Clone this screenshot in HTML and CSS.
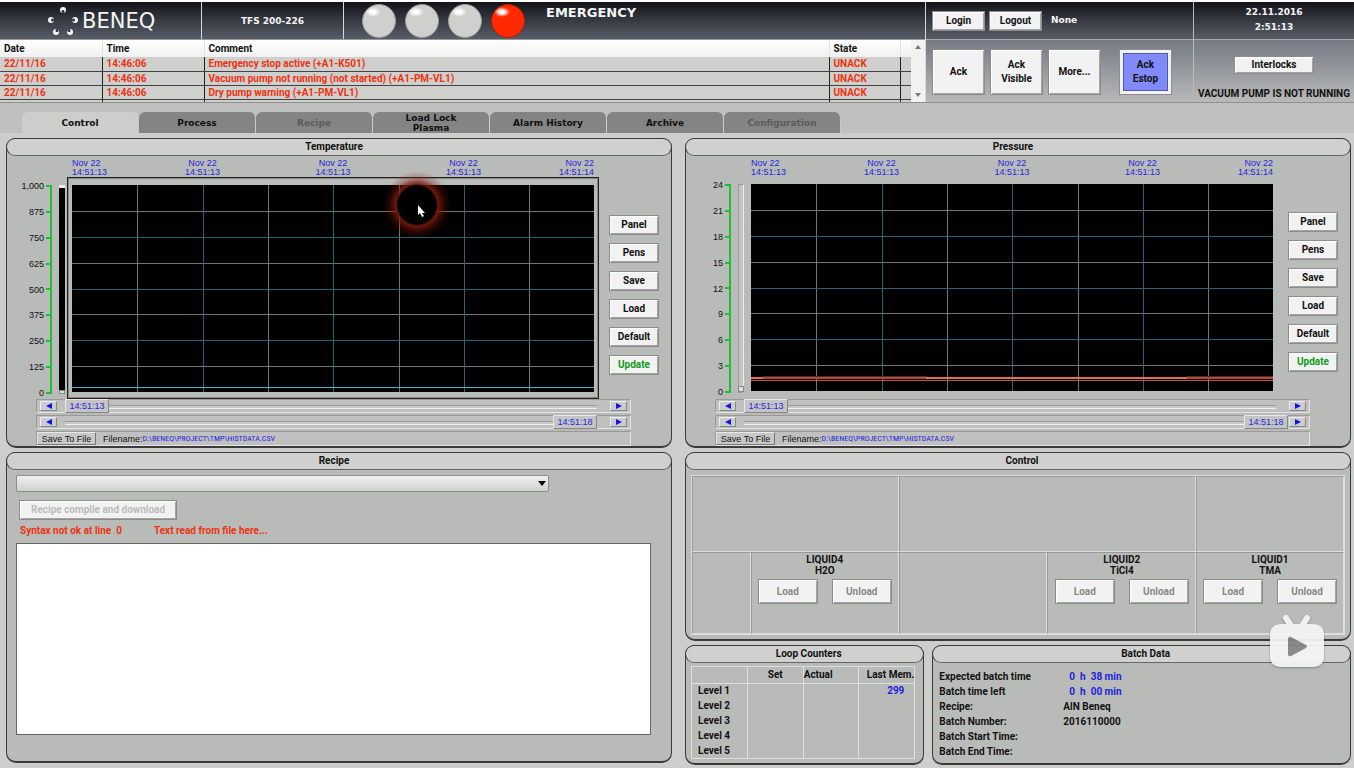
FILE: index.html
```html
<!doctype html>
<html lang="en">
<head>
    <meta charset="utf-8">
    <meta name="viewport" content="width=device-width, initial-scale=1">
    <link rel="stylesheet" href="styles.css">
    <title>TFS 200-226</title>
</head>
<body>
    <header class="top">
        <div class="top-left">
            <div class="banner">
                <div class="logo">
                    <svg width="30" height="30" viewBox="0 0 30 30" aria-hidden="true">
                        <g fill="#f4f4f4">
                            <circle cx="15" cy="4" r="3"/><circle cx="3" cy="14" r="3"/><circle cx="27" cy="14" r="3"/>
                            <circle cx="8" cy="26" r="3"/><circle cx="22" cy="26" r="3"/>
                        </g>
                        <g fill="#2b2f36">
                            <circle cx="15" cy="5.5" r="1.5"/><circle cx="4.5" cy="14" r="1.5"/><circle cx="25.5" cy="14" r="1.5"/>
                            <circle cx="9" cy="24.5" r="1.5"/><circle cx="21" cy="24.5" r="1.5"/>
                        </g>
                    </svg>
                    <span>BENEQ</span>
                </div>
                <div class="model">TFS 200-226</div>
                <div class="lamps">
                    <i class="lamp"></i><i class="lamp"></i><i class="lamp"></i><i class="lamp lamp-red"></i>
                    <b>EMERGENCY</b>
                </div>
            </div>
            <div class="alarms">
                <table>
                    <thead>
                        <tr><th class="c-date">Date</th><th class="c-time">Time</th><th>Comment</th><th class="c-state">State</th><th class="c-end"></th></tr>
                    </thead>
                    <tbody>
                        <tr><td>22/11/16</td><td>14:46:06</td><td>Emergency stop active (+A1-K501)</td><td>UNACK</td><td></td></tr>
                        <tr><td>22/11/16</td><td>14:46:06</td><td>Vacuum pump not running (not started) (+A1-PM-VL1)</td><td>UNACK</td><td></td></tr>
                        <tr><td>22/11/16</td><td>14:46:06</td><td>Dry pump warning (+A1-PM-VL1)</td><td>UNACK</td><td></td></tr>
                        <tr class="rest"><td></td><td></td><td></td><td></td><td></td></tr>
                    </tbody>
                </table>
                <div class="scroll">
                    <svg width="6" height="4" viewBox="0 0 6 4"><path d="M3 0L6 4H0Z" fill="#777"/></svg>
                    <svg width="6" height="4" viewBox="0 0 6 4"><path d="M0 0H6L3 4Z" fill="#777"/></svg>
                </div>
            </div>
        </div>
        <div class="top-mid">
            <div class="user">
                <button class="btn">Login</button>
                <button class="btn">Logout</button>
                <span>None</span>
            </div>
            <div class="acks">
                <button class="btn">Ack</button>
                <button class="btn">Ack<br>Visible</button>
                <button class="btn">More...</button>
                <button class="btn btn-estop">Ack<br>Estop</button>
            </div>
        </div>
        <div class="top-right">
            <div class="clock">22.11.2016<br>2:51:13</div>
            <div class="status">
                <button class="btn">Interlocks</button>
                <span>VACUUM PUMP IS NOT RUNNING</span>
            </div>
        </div>
    </header>

    <nav class="tabs">
        <button class="tab active">Control</button>
        <button class="tab">Process</button>
        <button class="tab" disabled>Recipe</button>
        <button class="tab">Load Lock<br>Plasma</button>
        <button class="tab">Alarm History</button>
        <button class="tab">Archive</button>
        <button class="tab" disabled>Configuration</button>
    </nav>

    <main>
        <div class="col">
            <section class="panel panel-wide">
                <h2>Temperature</h2>
                <div class="trend trend-selected">
                    <div class="times">
                        <span>Nov 22<br>14:51:13</span><span>Nov 22<br>14:51:13</span><span>Nov 22<br>14:51:13</span><span>Nov 22<br>14:51:13</span><span>Nov 22<br>14:51:14</span>
                    </div>
                    <div class="scale">
                        <div class="nums"><span>1,000</span><span>875</span><span>750</span><span>625</span><span>500</span><span>375</span><span>250</span><span>125</span><span>0</span></div>
                        <svg class="axis" width="6" height="209" viewBox="0 0 6 209"><path d="M5 0V209M0 1H5M0 27H5M0 53H5M0 79H5M0 104H5M0 130H5M0 156H5M0 182H5M0 208H5"/></svg>
                    </div>
                    <input class="range" type="range" min="0" max="1000" value="0" aria-label="Temperature range">
                    <div class="plot">
                        <svg viewBox="0 0 522 207" preserveAspectRatio="none">
                            <path class="g-grey" d="M65 0V207M196 0V207M327 0V207M457 0V207M0 26H522M0 78H522M0 129H522M0 181H522"/>
                            <path class="g-teal" d="M131 0V207M261 0V207M392 0V207M0 52H522M0 104H522M0 155H522"/>
                            <path class="pen-blue" d="M0 202H522"/>
                        </svg>
                        <div class="glow"></div>
                        <svg class="cursor" width="9" height="13" viewBox="0 0 9 13"><path d="M1 0V10L3 8L5 12L7 11L5 8H8Z" fill="#fff"/></svg>
                    </div>
                    <div class="tools">
                        <button class="btn">Panel</button>
                        <button class="btn">Pens</button>
                        <button class="btn">Save</button>
                        <button class="btn">Load</button>
                        <button class="btn">Default</button>
                        <button class="btn green">Update</button>
                    </div>
                </div>
                <div class="bars">
                    <div class="bar">
                        <button class="step" aria-label="Start back"><svg width="6" height="6" viewBox="0 0 6 6"><path d="M6 0V6L0 3Z"/></svg></button>
                        <div class="track"><input type="range" value="0" aria-label="Start time"><output>14:51:13</output></div>
                        <button class="step" aria-label="Start forward"><svg width="6" height="6" viewBox="0 0 6 6"><path d="M0 0V6L6 3Z"/></svg></button>
                    </div>
                    <div class="bar">
                        <button class="step" aria-label="End back"><svg width="6" height="6" viewBox="0 0 6 6"><path d="M6 0V6L0 3Z"/></svg></button>
                        <div class="track track-end"><input type="range" value="100" aria-label="End time"><output>14:51:18</output></div>
                        <button class="step" aria-label="End forward"><svg width="6" height="6" viewBox="0 0 6 6"><path d="M0 0V6L6 3Z"/></svg></button>
                    </div>
                    <div class="bar file">
                        <button>Save To File</button>
                        <span>Filename:</span><span class="path">D:\BENEQ\PROJECT\TMP\HISTDATA.CSV</span>
                    </div>
                </div>
            </section>

            <section class="panel panel-wide">
                <h2>Recipe</h2>
                <div class="recipe">
                    <div class="pick">
                        <select aria-label="Recipe"><option></option></select>
                        <svg width="8" height="5" viewBox="0 0 8 5"><path d="M0 0H8L4 5Z"/></svg>
                    </div>
                    <button class="btn compile" disabled>Recipe compile and download</button>
                    <p class="msgs"><span>Syntax not ok at line&nbsp; 0</span><span>Text read from file here...</span></p>
                    <textarea aria-label="Recipe text"></textarea>
                </div>
            </section>
        </div>

        <div class="col">
            <section class="panel panel-wide">
                <h2>Pressure</h2>
                <div class="trend">
                    <div class="times">
                        <span>Nov 22<br>14:51:13</span><span>Nov 22<br>14:51:13</span><span>Nov 22<br>14:51:13</span><span>Nov 22<br>14:51:13</span><span>Nov 22<br>14:51:14</span>
                    </div>
                    <div class="scale">
                        <div class="nums"><span>24</span><span>21</span><span>18</span><span>15</span><span>12</span><span>9</span><span>6</span><span>3</span><span>0</span></div>
                        <svg class="axis" width="6" height="209" viewBox="0 0 6 209"><path d="M5 0V209M0 1H5M0 27H5M0 53H5M0 79H5M0 104H5M0 130H5M0 156H5M0 182H5M0 208H5"/></svg>
                    </div>
                    <input class="range" type="range" min="0" max="24" value="0" aria-label="Pressure range">
                    <div class="plot">
                        <svg viewBox="0 0 522 207" preserveAspectRatio="none">
                            <path class="g-grey" d="M65 0V207M196 0V207M327 0V207M457 0V207M0 26H522M0 78H522M0 129H522M0 181H522"/>
                            <path class="g-teal" d="M131 0V207M261 0V207M392 0V207M0 52H522M0 104H522M0 155H522"/>
                            <path class="pen-green" d="M12 192H175V193H436V192H522"/>
                            <path class="pen-orange" d="M0 196H522"/>
                            <path class="pen-red" d="M0 194H522"/>
                            <path class="pen-pink" d="M0 194H12M175 194H436"/>
                        </svg>
                    </div>
                    <div class="tools">
                        <button class="btn">Panel</button>
                        <button class="btn">Pens</button>
                        <button class="btn">Save</button>
                        <button class="btn">Load</button>
                        <button class="btn">Default</button>
                        <button class="btn green">Update</button>
                    </div>
                </div>
                <div class="bars">
                    <div class="bar">
                        <button class="step" aria-label="Start back"><svg width="6" height="6" viewBox="0 0 6 6"><path d="M6 0V6L0 3Z"/></svg></button>
                        <div class="track"><input type="range" value="0" aria-label="Start time"><output>14:51:13</output></div>
                        <button class="step" aria-label="Start forward"><svg width="6" height="6" viewBox="0 0 6 6"><path d="M0 0V6L6 3Z"/></svg></button>
                    </div>
                    <div class="bar">
                        <button class="step" aria-label="End back"><svg width="6" height="6" viewBox="0 0 6 6"><path d="M6 0V6L0 3Z"/></svg></button>
                        <div class="track track-end track-full"><input type="range" value="100" aria-label="End time"><output>14:51:18</output></div>
                        <button class="step" aria-label="End forward"><svg width="6" height="6" viewBox="0 0 6 6"><path d="M0 0V6L6 3Z"/></svg></button>
                    </div>
                    <div class="bar file">
                        <button>Save To File</button>
                        <span>Filename:</span><span class="path">D:\BENEQ\PROJECT\TMP\HISTDATA.CSV</span>
                    </div>
                </div>
            </section>

            <section class="panel">
                <h2>Control</h2>
                <div class="liquids">
                    <div class="wide"></div>
                    <div class="wide"></div>
                    <div></div>
                    <div></div>
                    <div class="liquid">
                        <p>LIQUID4<br>H2O</p>
                        <button class="btn" disabled>Load</button><button class="btn" disabled>Unload</button>
                    </div>
                    <div></div>
                    <div class="liquid">
                        <p>LIQUID2<br>TiCl4</p>
                        <button class="btn" disabled>Load</button><button class="btn" disabled>Unload</button>
                    </div>
                    <div class="liquid">
                        <p>LIQUID1<br>TMA</p>
                        <button class="btn" disabled>Load</button><button class="btn" disabled>Unload</button>
                    </div>
                </div>
            </section>

            <div class="pair">
                <section class="panel">
                    <h2>Loop Counters</h2>
                    <table class="loops">
                        <thead>
                            <tr><th></th><th>Set</th><th class="act">Actual</th><th class="mem">Last Mem.</th></tr>
                        </thead>
                        <tbody>
                            <tr><td>Level 1</td><td></td><td></td><td class="blue">299</td></tr>
                            <tr><td>Level 2</td><td></td><td></td><td></td></tr>
                            <tr><td>Level 3</td><td></td><td></td><td></td></tr>
                            <tr><td>Level 4</td><td></td><td></td><td></td></tr>
                            <tr><td>Level 5</td><td></td><td></td><td></td></tr>
                        </tbody>
                    </table>
                </section>
                <section class="panel">
                    <h2>Batch Data</h2>
                    <dl class="batch">
                        <dt>Expected batch time</dt><dd class="blue">0&nbsp; h&nbsp; 38 min</dd>
                        <dt>Batch time left</dt><dd class="blue">0&nbsp; h&nbsp; 00 min</dd>
                        <dt>Recipe:</dt><dd>AlN Beneq</dd>
                        <dt>Batch Number:</dt><dd>2016110000</dd>
                        <dt>Batch Start Time:</dt><dd></dd>
                        <dt>Batch End Time:</dt><dd></dd>
                    </dl>
                </section>
            </div>
        </div>
    </main>

    <svg class="player" width="58" height="56" viewBox="0 0 58 56" aria-hidden="true">
        <path d="M18 4L23 12M39 4L34 12" stroke="#f4f4f4" stroke-width="6" stroke-linecap="round"/>
        <path fill="#f4f4f4" d="M14 10H44Q56 10 56 21V42Q56 53 44 53H14Q2 53 2 42V21Q2 10 14 10Z"/>
        <path d="M23 23Q20 22 20 25V40Q20 43 23 42L38 34Q40 32 38 31Z" fill="#858585"/>
    </svg>
</body>
</html>
```
FILE: styles.css
```css
* {
    box-sizing: border-box;
}
body {
    margin: 0;
    min-height: 100vh;
    background: #cdcdcb;
    border-top: 2px solid #fff;
    border-bottom: 1px solid #999;
    font: bold 10px/14px Roboto, "Liberation Sans", sans-serif;
    color: #111;
}
h2, p, dl, dd {
    margin: 0;
}
button, select, textarea, input {
    font: inherit;
    color: inherit;
    margin: 0;
    padding: 0;
}
.btn {
    background: #f2f2f2;
    border: 1px solid #8c8c8c;
    box-shadow: inset 1px 1px #fff, inset -1px -1px #a4a4a4;
}
.btn:disabled {
    color: #888;
}
.blue {
    color: #2222dd;
}

/* header */
.top {
    display: flex;
    height: 101px;
    border-bottom: 1px solid #8f8f8f;
}
.top-left {
    flex: 1;
    display: flex;
    flex-direction: column;
}
.banner, .user, .clock {
    height: 37px;
    background: linear-gradient(#121418, #363a42 50%, #575d68);
    color: #f4f4f4;
    font: bold 9px/15px "DejaVu Sans", sans-serif;
}
.banner {
    display: flex;
}
.logo {
    width: 202px;
    display: flex;
    align-items: center;
    gap: 4px;
    padding-left: 48px;
    border-right: 1px solid #d8d8d8;
    font: 21px/30px "DejaVu Sans", sans-serif;
}
.model {
    width: 142px;
    display: flex;
    align-items: center;
    justify-content: center;
    padding-top: 2px;
    border-right: 1px solid #d8d8d8;
}
.lamps {
    flex: 1;
    display: flex;
    align-items: center;
    gap: 9px;
    padding-left: 18px;
}
.lamp {
    width: 34px;
    height: 34px;
    border-radius: 50%;
    border: 1px solid #9a9a9a;
    background: radial-gradient(ellipse 8px 5px at 10px 7px, #fff 30%, rgba(255, 255, 255, 0) 100%), #cfcfcd;
}
.lamp-red {
    border-color: #b02000;
    background: radial-gradient(ellipse 8px 5px at 10px 7px, #fff 30%, rgba(255, 255, 255, 0) 100%), #ff2a00;
}
.lamps b {
    align-self: flex-start;
    margin-left: 12px;
    font-size: 13px;
    line-height: 22px;
}
.alarms {
    flex: 1;
    display: flex;
    background: #cfcfcd;
    border-top: 1px solid #999;
}
.alarms table {
    flex: 1;
    table-layout: fixed;
    border-collapse: collapse;
    line-height: 13px;
}
.alarms th {
    height: 17px;
    padding: 0 4px;
    text-align: left;
    background: linear-gradient(#fff, #f0f0f0);
    border-left: 1px solid #e2e2e2;
}
.alarms td {
    height: 14px;
    padding: 0 4px;
    color: #ee3311;
    border-left: 1px solid #222;
    border-bottom: 1px solid #444;
}
.alarms th:first-child, .alarms td:first-child {
    border-left: 0;
}
.alarms .rest td {
    height: 3px;
    padding: 0;
    border-bottom: 0;
}
.c-date, .c-time {
    width: 102px;
}
.c-state {
    width: 71px;
}
.c-end {
    width: 11px;
}
.scroll {
    width: 14px;
    display: flex;
    flex-direction: column;
    align-items: center;
    justify-content: space-between;
    padding: 5px 0;
    background: #f2f2f2;
}
.top-mid {
    width: 268px;
    border-left: 1px solid #d8d8d8;
}
.top-right {
    width: 161px;
    border-left: 1px solid #bbb;
}
.user {
    display: flex;
    align-items: center;
    gap: 4px;
    padding-left: 6px;
}
.user .btn {
    width: 53px;
    height: 20px;
    color: #111;
    font: bold 10px/14px Roboto, sans-serif;
}
.user span {
    margin-left: 5px;
}
.acks, .status {
    height: 63px;
    border-top: 1px solid #aaa;
    background: linear-gradient(#747a84, #b9b9b9);
}
.acks {
    display: flex;
    gap: 5px;
    padding: 9px 6px;
}
.acks .btn {
    width: 53px;
    height: 46px;
}
.acks .btn-estop {
    margin-left: 13px;
    background: #808af8;
    border: 4px solid #f2f2f2;
    outline: 1px solid #8c8c8c;
    outline-offset: -1px;
    box-shadow: inset 0 0 0 1px #5059b0;
}
.clock {
    padding-top: 3px;
    text-align: center;
}
.status {
    display: flex;
    flex-direction: column;
    align-items: center;
    gap: 13px;
    padding-top: 16px;
}
.status .btn {
    width: 80px;
    height: 18px;
}
.status span {
    white-space: nowrap;
}

/* tabs */
.tabs {
    display: flex;
    height: 30px;
    padding: 9px 0 0 22px;
    background: #c0c0c0;
}
.tab {
    width: 117px;
    border: 0;
    border-right: 1px solid #c8c8c8;
    border-radius: 6px 6px 0 0;
    background: #848484;
    font: bold 9px/10px "DejaVu Sans", sans-serif;
}
.tab.active {
    background: #cdcdcb;
}
.tab:disabled {
    color: #5c5c5c;
}

/* panels */
main {
    display: grid;
    grid-template-columns: 1fr 1fr;
    gap: 13px;
    padding: 5px 3px 4px 6px;
}
.col {
    display: flex;
    flex-direction: column;
    gap: 4px;
}
.panel {
    background: #b9bbb9;
    border: 1px solid #3a3a3a;
    border-bottom-width: 2px;
    border-radius: 10px;
}
.panel h2 {
    height: 18px;
    margin: -1px -1px 0;
    padding-left: 8px;
    border: 1px solid #3a3a3a;
    border-bottom-color: #666;
    border-radius: 9px;
    background: #d0d0ce;
    font-size: 10px;
    line-height: 16px;
    text-align: center;
}
.panel-wide h2 {
    padding: 0 10px 0 0;
}

/* trends */
.trend {
    display: grid;
    grid-template-columns: 45px 6px 1fr 58px;
    grid-template-rows: 25px 207px;
    column-gap: 7px;
    padding: 3px 12px 0 0;
}
.times {
    grid-column: 3;
    display: grid;
    grid-template-columns: 1fr 2fr 2fr 2fr 1fr;
    text-align: center;
    color: #2626dd;
    font: 9px/9px "Liberation Sans", Arial, sans-serif;
}
.times span:first-child {
    text-align: left;
}
.times span:last-child {
    text-align: right;
}
.scale {
    grid-row: 2;
    grid-column: 1;
    display: flex;
    justify-content: flex-end;
    gap: 2px;
}
.nums {
    display: flex;
    flex-direction: column;
    justify-content: space-between;
    height: 217px;
    margin-top: -4px;
    text-align: right;
    font: 9px/10px "Liberation Sans", Arial, sans-serif;
}
.axis {
    fill: none;
    stroke: #1fbf35;
    stroke-width: 2;
}
.range {
    grid-row: 2;
    width: 6px;
    height: 209px;
    appearance: none;
    writing-mode: vertical-lr;
    direction: rtl;
    background: #c4c4c4;
    border: 1px solid #999;
    border-right-color: #eee;
}
.range::-webkit-slider-thumb {
    appearance: none;
    width: 6px;
    height: 6px;
    background: #ddd;
    border: 1px solid #888;
}
.plot {
    grid-row: 2;
    position: relative;
    z-index: 0;
}
.plot > svg:first-child {
    display: block;
    width: 100%;
    height: 207px;
    background: #000;
    fill: none;
    shape-rendering: crispEdges;
}
.g-grey {
    stroke: #747474;
}
.g-teal {
    stroke: #286474;
}
.pen-blue {
    stroke: #4fb4c8;
}
.pen-green {
    stroke: #14501c;
}
.pen-orange {
    stroke: #b06038;
}
.pen-red {
    stroke: #e0303f;
    stroke-width: 2;
}
.pen-pink {
    stroke: #e86a5c;
    stroke-width: 2;
}
.tools {
    grid-row: 2;
    display: flex;
    flex-direction: column;
    gap: 8px;
    padding: 28px 0 0 8px;
}
.tools .btn {
    height: 20px;
}
.tools .green {
    color: #119922;
}
.trend-selected {
    grid-template-rows: 26px 207px;
}
.trend-selected .tools {
    padding-top: 30px;
}
.trend-selected .range {
    background: #000;
    border: 0;
    border-top: 3px solid #eee;
}
.trend-selected .range::-webkit-slider-thumb {
    height: 4px;
}
.trend-selected .plot::before {
    content: "";
    position: absolute;
    inset: -8px -5px -7px -5px;
    z-index: -1;
    background: #b9bbb9;
    border: 1px solid #222;
    box-shadow: inset 1px 1px #888, inset -1px -1px #888;
}
.glow {
    position: absolute;
    left: 66%;
    top: 20px;
    width: 72px;
    height: 72px;
    margin: -36px;
    border-radius: 50%;
    background: radial-gradient(circle, #000 19px, rgba(120, 26, 12, .9) 21px, rgba(130, 22, 8, .3) 27px, rgba(140, 24, 8, 0) 34px);
}
.cursor {
    position: absolute;
    left: 66%;
    top: 20px;
}
.bars {
    display: flex;
    flex-direction: column;
    gap: 2px;
    margin: 8px 40px 0 29px;
    font: 9px/12px "Liberation Sans", Arial, sans-serif;
}
.trend-selected + .bars {
    margin-top: 7px;
}
.bar {
    height: 14px;
    display: flex;
    align-items: center;
    padding: 0 3px;
    border: 1px solid #999;
    border-right-color: #e4e4e4;
    border-bottom-color: #e4e4e4;
    background: #c0c0c0;
}
.step {
    width: 17px;
    height: 10px;
    display: flex;
    align-items: center;
    justify-content: center;
    background: #ccc;
    border: 1px solid #eee;
    border-right-color: #888;
    border-bottom-color: #888;
    fill: #1111ee;
}
.track {
    flex: 1;
    height: 14px;
    position: relative;
    margin: 0 13px 0 8px;
}
.track-full {
    margin-right: 1px;
}
.track input {
    display: block;
    width: 100%;
    height: 14px;
    appearance: none;
    background: linear-gradient(transparent 6px, #999 6px, #999 7px, #c8c8c8 7px, #c8c8c8 9px, #eee 9px, #eee 10px, transparent 10px);
}
.track input::-webkit-slider-thumb {
    appearance: none;
    width: 44px;
    height: 14px;
    background: #c4c4c4;
    border: 1px solid #e8e8e8;
    border-right-color: #888;
    border-bottom-color: #888;
}
.track output {
    position: absolute;
    left: 0;
    top: 1px;
    width: 44px;
    text-align: center;
    color: #2626dd;
    pointer-events: none;
}
.track-end output {
    left: auto;
    right: 0;
}
.file {
    height: 15px;
    padding: 0;
}
.file button {
    height: 13px;
    width: 59px;
    background: #c8c8c8;
    border: 1px solid #e8e8e8;
    border-right-color: #777;
    border-bottom-color: #777;
}
.file span {
    margin-left: 7px;
}
.file .path {
    margin-left: 0;
    font: 8px/12px "Liberation Sans Narrow", "Roboto Condensed", "Liberation Sans", sans-serif;
    color: #2626dd;
}

/* recipe */
.recipe {
    padding: 5px 20px 26px 9px;
}
.pick {
    position: relative;
    width: 84%;
}
.pick select {
    display: block;
    width: 100%;
    height: 17px;
    appearance: none;
    border: 1px solid #8c8c8c;
    border-radius: 2px;
    background: linear-gradient(#f0f0f0, #d0d0d0);
}
.pick svg {
    position: absolute;
    right: 3px;
    top: 6px;
}
.compile {
    display: block;
    width: 158px;
    height: 20px;
    margin: 8px 0 0 3px;
}
.compile:disabled {
    color: #bbb;
}
.msgs {
    display: flex;
    gap: 32px;
    padding: 4px 0 5px 4px;
    color: #ee3311;
}
.recipe textarea {
    display: block;
    width: 100%;
    height: 192px;
    border: 1px solid #666;
    background: #fff;
    resize: none;
}

/* control */
.liquids {
    display: grid;
    grid-template-columns: 59fr 148fr 149fr 149fr 148fr;
    grid-template-rows: 76px 82px;
    margin: 5px 5px 4px;
    border: 1px solid #dedede;
}
.liquids > div {
    border-left: 1px solid #999;
    border-top: 1px solid #999;
    border-right: 1px solid #dedede;
    border-bottom: 1px solid #dedede;
}
.liquids .wide {
    grid-column: span 2;
}
.liquid {
    display: grid;
    grid-template-columns: 60px 60px;
    justify-content: center;
    gap: 3px 14px;
    align-content: start;
    padding-top: 1px;
}
.liquid p {
    grid-column: span 2;
    text-align: center;
    line-height: 11px;
}
.liquid .btn {
    height: 25px;
}

/* bottom row */
.pair {
    display: grid;
    grid-template-columns: 239fr 418fr;
    gap: 8px;
}
.loops {
    width: calc(100% - 13px);
    margin: 3px 5px 4px;
    table-layout: fixed;
    border-collapse: collapse;
    border: 1px solid #dedede;
    line-height: 14px;
}
.loops th {
    height: 17px;
    padding: 0;
    border: 1px solid #dedede;
    text-align: center;
}
.loops td {
    height: 15px;
    padding: 0 0 0 6px;
    border-right: 1px solid #dedede;
}
.loops .act {
    text-align: left;
}
.loops .mem {
    text-align: right;
}
.loops .blue {
    padding: 0 10px 0 0;
    text-align: right;
}
.batch {
    display: grid;
    grid-template-columns: 124px 1fr;
    padding: 6px 6px 0;
    line-height: 15px;
}
.batch .blue {
    padding-left: 6px;
}

/* video overlay */
.player {
    position: fixed;
    right: 28px;
    bottom: 98px;
    opacity: .94;
    fill: none;
    filter: drop-shadow(0 1px 1px rgba(0, 0, 0, .3));
}
```
